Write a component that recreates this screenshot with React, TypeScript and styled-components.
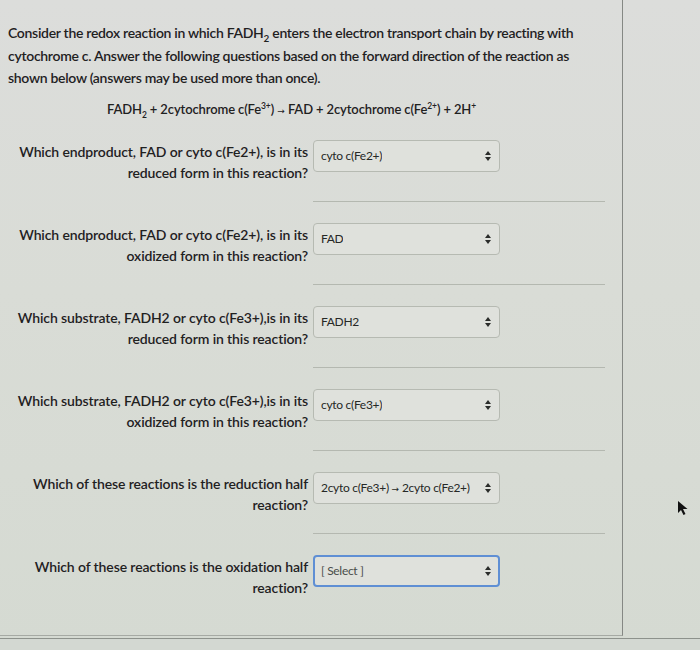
import React from "react";
import styled, { createGlobalStyle } from "styled-components";

const GlobalStyle = createGlobalStyle`
  html, body {
    margin: 0;
    padding: 0;
  }
  body {
    font-family: Lato, "Open Sans", Arial, sans-serif;
    color: #1f211f;
  }
`;

type Question = {
  label: string;
  value: string;
  valueAfterArrow?: string;
  focused?: boolean;
  placeholder?: boolean;
  underline?: boolean;
};

const questions: Question[] = [
  {
    label: "Which endproduct, FAD or cyto c(Fe2+), is in its reduced form in this reaction?",
    value: "cyto c(Fe2+)",
    underline: true,
  },
  {
    label: "Which endproduct, FAD or cyto c(Fe2+), is in its oxidized form in this reaction?",
    value: "FAD",
    underline: true,
  },
  {
    label: "Which substrate, FADH2 or cyto c(Fe3+),is in its reduced form in this reaction?",
    value: "FADH2",
    underline: true,
  },
  {
    label: "Which substrate, FADH2 or cyto c(Fe3+),is in its oxidized form in this reaction?",
    value: "cyto c(Fe3+)",
    underline: true,
  },
  {
    label: "Which of these reactions is the reduction half reaction?",
    value: "2cyto c(Fe3+)",
    valueAfterArrow: "2cyto c(Fe2+)",
    underline: true,
  },
  {
    label: "Which of these reactions is the oxidation half reaction?",
    value: "[ Select ]",
    focused: true,
    placeholder: true,
  },
];

function Chevrons() {
  return (
    <ChevronIcon width="6" height="10" viewBox="0 0 6 10">
      <path d="M3 0 L6 4 L0 4 Z" fill="#2a2c2a" />
      <path d="M3 10 L6 6 L0 6 Z" fill="#2a2c2a" />
    </ChevronIcon>
  );
}

function Cursor() {
  return (
    <svg width="12" height="16" viewBox="0 0 12 16">
      <path d="M1 1 L1 13 L4 10 L6.5 15 L8.5 14 L6 9 L10.5 9 Z" fill="#111" />
    </svg>
  );
}

export default function App() {
  return (
    <Page>
      <GlobalStyle />
      <Panel>
        <Intro>
          Consider the redox reaction in which FADH<sub>2</sub> enters the electron transport chain
          by reacting with cytochrome c. Answer the following questions based on the forward
          direction of the reaction as shown below (answers may be used more than once).
        </Intro>
        <Equation>
          FADH<sub>2</sub> + 2cytochrome c(Fe<sup>3+</sup>) <SmallArrow>→</SmallArrow> FAD +
          2cytochrome c(Fe<sup>2+</sup>) + 2H<sup>+</sup>
        </Equation>
        <QuestionList>
          {questions.map((q) => (
            <Row key={q.label}>
              <Label>{q.label}</Label>
              <Control>
                <Select $focused={q.focused}>
                  <SelectText $placeholder={q.placeholder}>
                    {q.value}
                    {q.valueAfterArrow && (
                      <>
                        {" "}
                        <SmallArrow>→</SmallArrow> {q.valueAfterArrow}
                      </>
                    )}
                  </SelectText>
                  <Chevrons />
                </Select>
                {q.underline && <Underline />}
              </Control>
            </Row>
          ))}
        </QuestionList>
      </Panel>
      <BottomStrip />
      <CursorSpot>
        <Cursor />
      </CursorSpot>
    </Page>
  );
}

const Page = styled.div`
  position: relative;
  width: 700px;
  height: 650px;
  overflow: hidden;
  background: linear-gradient(180deg, #dcdddb 0%, #d9dcd6 45%, #d5dad2 100%);
`;

const Panel = styled.div`
  width: 614px;
  height: 613px;
  padding: 22px 0 0 8px;
  border-right: 1px solid #858884;
  border-bottom: 1px solid #a6aaa4;
`;

const Intro = styled.p`
  margin: 0;
  width: 592px;
  font-size: 14px;
  line-height: 22.5px;
  font-weight: 600;
  letter-spacing: -0.3px;

  sub {
    font-size: 10px;
    line-height: 0;
  }
`;

const Equation = styled.p`
  margin: 8px 0 0 99px;
  font-size: 13px;
  line-height: 22px;
  font-weight: 600;
  letter-spacing: -0.12px;

  sub,
  sup {
    font-size: 8.5px;
    line-height: 0;
  }
`;

const SmallArrow = styled.span`
  font-size: 9px;
  font-family: "DejaVu Sans", sans-serif;
  font-weight: normal;
  letter-spacing: 0;
`;

const QuestionList = styled.div`
  margin-top: 18px;
  display: flex;
  flex-direction: column;
  gap: 21px;
`;

const Row = styled.div`
  display: flex;
  align-items: flex-start;
  gap: 5px;
`;

const Label = styled.div`
  width: 300px;
  padding-top: 1px;
  text-align: right;
  font-size: 14px;
  line-height: 21px;
  font-weight: 600;
  letter-spacing: -0.12px;
`;

const Control = styled.div`
  display: flex;
  flex-direction: column;
  align-items: flex-start;
`;

const Select = styled.div<{ $focused?: boolean }>`
  box-sizing: border-box;
  width: 187px;
  height: 32px;
  display: flex;
  align-items: center;
  justify-content: space-between;
  gap: 4px;
  padding: ${(p) => (p.$focused ? "0 7px 0 6px" : "0 8px 0 7px")};
  background: #dfe1dc;
  border: ${(p) => (p.$focused ? "2px solid #5f8fd4" : "1px solid #b6bab2")};
  border-radius: 4px;
`;

const SelectText = styled.span<{ $placeholder?: boolean }>`
  font-size: 12px;
  letter-spacing: -0.3px;
  color: ${(p) => (p.$placeholder ? "#4a4d4a" : "#262826")};
  white-space: nowrap;
  overflow: hidden;
`;

const ChevronIcon = styled.svg`
  flex-shrink: 0;
`;

const Underline = styled.div`
  margin-top: 29px;
  width: 292px;
  height: 1px;
  background: #b4b8b0;
`;

const BottomStrip = styled.div`
  margin-top: 2px;
  height: 12px;
  border-top: 1px solid #8d928c;
  background: #d3d8d2;
`;

const CursorSpot = styled.div`
  position: absolute;
  left: 677px;
  top: 500px;
`;
